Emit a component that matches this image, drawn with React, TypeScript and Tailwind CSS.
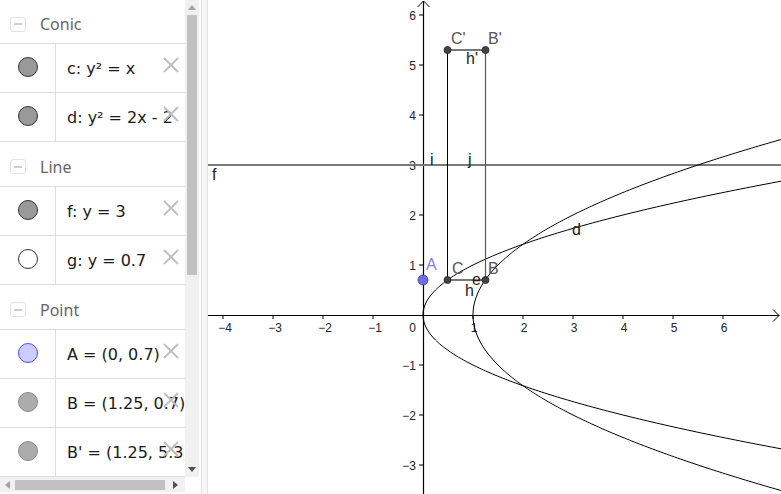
import React from 'react';

type Dot = 'dark' | 'empty' | 'blue' | 'light';

interface Item {
    dot: Dot;
    text: React.ReactNode;
}

interface Group {
    title: string;
    items: Item[];
}

const dotClass: Record<Dot, string> = {
    dark: 'bg-[#999999] border-[#333333]',
    empty: 'bg-white border-[#333333]',
    blue: 'bg-[#ccccff] border-[#4d4dff]',
    light: 'bg-[#acacac] border-[#8a8a8a]',
};

const groups: Group[] = [
    {
        title: 'Conic',
        items: [
            { dot: 'dark', text: <>c: y² = x</> },
            { dot: 'dark', text: <>d: y² = 2x - 2</> },
        ],
    },
    {
        title: 'Line',
        items: [
            { dot: 'dark', text: <>f: y = 3</> },
            { dot: 'empty', text: <>g: y = 0.7</> },
        ],
    },
    {
        title: 'Point',
        items: [
            { dot: 'blue', text: <>A = (0, 0.7)</> },
            { dot: 'light', text: <>B = (1.25, 0.7)</> },
            { dot: 'light', text: <>B' = (1.25, 5.3)</> },
        ],
    },
];

function CloseX() {
    return (
        <svg width="16" height="16" viewBox="0 0 16 16" className="absolute right-[6px] top-[13px]">
            <path d="M1 1 L15 15 M15 1 L1 15" stroke="#bdbdbd" strokeWidth="1.8" fill="none" />
        </svg>
    );
}

function AlgebraView() {
    return (
        <div className="w-[185px] h-[477px] overflow-hidden whitespace-nowrap">
            {groups.map((g, gi) => (
                <div key={g.title}>
                    <div className={`${gi === 0 ? 'h-[44px]' : 'h-[45px]'} flex items-center pt-[5px] border-b border-[#dddddd] font-['Noto_Sans',sans-serif]`}>
                        <div className="ml-[10px] w-[16px] h-[15px] rounded-[3px] border border-[#e2e2e2] flex items-center justify-center">
                            <div className="w-[8px] h-[2px] bg-[#cfcfcf]" />
                        </div>
                        <span className="ml-[14px] text-[16px] text-[#666666] leading-none">{g.title}</span>
                    </div>
                    {g.items.map((item, i) => (
                        <div key={i} className="relative h-[49px] flex border-b border-[#dddddd]">
                            <div className="w-[56px] flex-none flex items-start justify-center pt-[13px] border-r border-[#dddddd]">
                                <div className={`w-[20px] h-[20px] rounded-full border ${dotClass[item.dot]}`} />
                            </div>
                            <div className="pl-[11px] pt-[14px] text-[16px] text-[#1a1a1a] leading-[22px] font-['DejaVu_Sans',sans-serif]">{item.text}</div>
                            <CloseX />
                        </div>
                    ))}
                </div>
            ))}
        </div>
    );
}

function VScroll() {
    return (
        <div className="w-[14px] h-[477px] bg-[#f1f1f1] flex flex-col items-center">
            <div className="h-[15px] flex items-center justify-center">
                <svg width="8" height="5" viewBox="0 0 8 5"><path d="M0 5 L4 0 L8 5 Z" fill="#a3a3a3" /></svg>
            </div>
            <div className="w-[10px] h-[260px] bg-[#c1c1c1]" />
            <div className="flex-1" />
            <div className="h-[15px] flex items-center justify-center">
                <svg width="8" height="5" viewBox="0 0 8 5"><path d="M0 0 L4 5 L8 0 Z" fill="#505050" /></svg>
            </div>
        </div>
    );
}

function HScroll() {
    return (
        <div className="flex h-[17px]">
            <div className="w-[185px] h-[15px] bg-[#f1f1f1] flex items-center">
                <div className="w-[15px] flex items-center justify-center">
                    <svg width="5" height="8" viewBox="0 0 5 8"><path d="M5 0 L0 4 L5 8 Z" fill="#a3a3a3" /></svg>
                </div>
                <div className="w-[150px] h-[10px] bg-[#c1c1c1]" />
                <div className="flex-1 flex items-center justify-center">
                    <svg width="5" height="8" viewBox="0 0 5 8"><path d="M0 0 L5 4 L0 8 Z" fill="#505050" /></svg>
                </div>
            </div>
        </div>
    );
}

const OX = 423;
const OY = 315;
const U = 50;

function parabola(fx: (y: number) => number) {
    const pts: string[] = [];
    for (let y = -3.8; y <= 3.8001; y += 0.02) {
        pts.push(`${(OX + U * fx(y)).toFixed(2)},${(OY - U * y).toFixed(2)}`);
    }
    return 'M' + pts.join(' L');
}

function GraphicsView() {
    const xs = [-4, -3, -2, -1, 1, 2, 3, 4, 5, 6];
    const ys = [-3, -2, -1, 1, 2, 3, 4, 5, 6];
    const num = (n: number) => (n < 0 ? `\u2212${-n}` : `${n}`);
    return (
        <svg width="573" height="494" viewBox="208 0 573 494" className="block">
            <g fontFamily="'Liberation Sans', Arial, sans-serif" fontSize="12" fill="#222">
                {xs.map((k) => (
                    <g key={`x${k}`}>
                        <line x1={OX + U * k} y1={OY} x2={OX + U * k} y2={OY + 4} stroke="#000" strokeWidth="1" />
                        <text x={OX + U * k + (k < 0 ? 2 : 1)} y={332} textAnchor="middle">{num(k)}</text>
                    </g>
                ))}
                {ys.map((k) => (
                    <g key={`y${k}`}>
                        <line x1={OX - 4} y1={OY - U * k} x2={OX} y2={OY - U * k} stroke="#000" strokeWidth="1" />
                        <text x={416} y={OY - U * k + 4.5} textAnchor="end">{num(k)}</text>
                    </g>
                ))}
                <text x={416} y={332} textAnchor="end">0</text>
            </g>

            {/* axes */}
            <line x1="208" y1={OY + 0.5} x2="779" y2={OY + 0.5} stroke="#000" strokeWidth="1.2" />
            <path d="M773 309.5 L779 315.5 L773 321.5" stroke="#000" fill="none" strokeWidth="1" />
            <line x1={OX + 0.5} y1="1" x2={OX + 0.5} y2="494" stroke="#000" strokeWidth="1.2" />
            <path d="M417.5 7 L423.5 1 L429.5 7" stroke="#000" fill="none" strokeWidth="1" />

            {/* line f */}
            <line x1="208" y1="165" x2="781" y2="165" stroke="#7a7a7a" strokeWidth="2" />

            {/* conics */}
            <path d={parabola((y) => y * y)} stroke="#000" strokeWidth="1" fill="none" />
            <path d={parabola((y) => (y * y + 2) / 2)} stroke="#000" strokeWidth="1" fill="none" />

            {/* segments */}
            <line x1="447.5" y1="50" x2="447.5" y2="280" stroke="#000" strokeWidth="1" />
            <line x1="485.5" y1="50" x2="485.5" y2="280" stroke="#555" strokeWidth="1.2" />
            <line x1="447" y1="50" x2="485" y2="50" stroke="#777" strokeWidth="2" />
            <line x1="447" y1="280" x2="485" y2="280" stroke="#777" strokeWidth="2" />

            {/* points */}
            <circle cx="447.5" cy="50" r="3.5" fill="#444" stroke="#222" strokeWidth="0.8" />
            <circle cx="485.5" cy="50" r="3.5" fill="#444" stroke="#222" strokeWidth="0.8" />
            <circle cx="447.5" cy="280" r="3.5" fill="#444" stroke="#222" strokeWidth="0.8" />
            <circle cx="485.5" cy="280" r="3.5" fill="#444" stroke="#222" strokeWidth="0.8" />
            <circle cx="423" cy="280" r="5" fill="#6c6cf2" stroke="#3a3a70" strokeWidth="0.8" />

            {/* labels */}
            <g fontFamily="'Liberation Sans', Arial, sans-serif" fontSize="16">
                <text x="451" y="44" fill="#555">C'</text>
                <text x="488" y="44" fill="#555">B'</text>
                <text x="466" y="64" fill="#222">h'</text>
                <text x="430" y="165" fill="#222">i</text>
                <text x="468" y="165" fill="#222">j</text>
                <text x="212" y="180" fill="#222">f</text>
                <text x="572" y="235" fill="#222">d</text>
                <text x="426" y="270" fill="#7f7fff">A</text>
                <text x="452" y="274" fill="#555">C</text>
                <text x="488" y="274" fill="#555">B</text>
                <text x="472" y="285" fill="#222">e</text>
                <text x="465" y="296" fill="#222">h</text>
            </g>
        </svg>
    );
}

export default function App() {
    return (
        <div className="w-[781px] h-[494px] flex bg-white overflow-hidden">
            <div className="w-[199px] flex flex-col">
                <div className="flex">
                    <AlgebraView />
                    <VScroll />
                </div>
                <HScroll />
            </div>
            <div className="w-[9px] pl-[2px] flex">
                <div className="flex-1 bg-[#f6f6f6] border-l border-r border-[#e2e2e2]" />
            </div>
            <GraphicsView />
        </div>
    );
}
